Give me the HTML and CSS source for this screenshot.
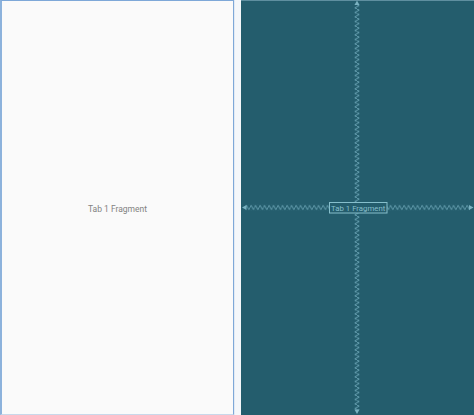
FILE: index.html
```html
<!DOCTYPE html>
<html>
<head>
<meta charset="utf-8">
<link rel="stylesheet" href="styles.css">
</head>
<body>
<div class="editor">
  <div class="design">
    <span class="design-label">Tab 1 Fragment</span>
  </div>
  <div class="divider"></div>
  <div class="blueprint">
    <svg class="bp-svg" width="233" height="415" viewBox="0 0 233 415">
      <defs>
        <pattern id="zv" patternUnits="userSpaceOnUse" x="113" y="0" width="6" height="4.5">
          <path d="M3 0 L5.2 1.1 L0.8 3.4 L3 4.5" fill="none" stroke="#6fa9b9" stroke-width="0.9"/>
        </pattern>
        <pattern id="zh" patternUnits="userSpaceOnUse" x="0" y="204.5" width="4.5" height="6">
          <path d="M0 3 L1.1 0.8 L3.4 5.2 L4.5 3" fill="none" stroke="#6fa9b9" stroke-width="0.9"/>
        </pattern>
      </defs>
      <line x1="0" y1="0.5" x2="233" y2="0.5" stroke="#5f8fa0" stroke-width="1"/>
      <rect x="113" y="4" width="6" height="198" fill="url(#zv)"/>
      <rect x="113" y="213" width="6" height="197" fill="url(#zv)"/>
      <rect x="4" y="204.5" width="84" height="6" fill="url(#zh)"/>
      <rect x="146" y="204.5" width="83" height="6" fill="url(#zh)"/>
      <path d="M116 0.5 L113.5 5 L118.5 5 Z" fill="#7ab2c1"/>
      <path d="M116 414 L113.5 409.5 L118.5 409.5 Z" fill="#7ab2c1"/>
      <path d="M1 207.5 L5.5 205 L5.5 210 Z" fill="#7ab2c1"/>
      <path d="M232.5 207.5 L228 205 L228 210 Z" fill="#7ab2c1"/>
      <rect x="88.5" y="202.5" width="57.5" height="10.5" fill="none" stroke="#86bfcc" stroke-width="1"/>
      <text x="117.2" y="210.6" text-anchor="middle" class="bp-text">Tab 1 Fragment</text>
    </svg>
  </div>
</div>
</body>
</html>
```
FILE: styles.css
```css
html, body {
  margin: 0;
  padding: 0;
  background: #f3f6f9;
  font-family: Roboto, "Noto Sans", sans-serif;
}
.editor {
  display: flex;
  width: 474px;
  height: 415px;
  overflow: hidden;
}
.design {
  width: 231px;
  height: 413px;
  background: #fafafa;
  border-top: 1px solid #7ea8d8;
  border-left: 2px solid #8cb2dc;
  border-right: 1px solid #7ea8d8;
  border-bottom: 1px solid #c8d8ea;
  display: flex;
  align-items: center;
  justify-content: center;
}
.design-label {
  font-size: 8.5px;
  color: #828282;
  margin-top: 2px;
}
.divider {
  width: 7px;
  height: 415px;
  background: #f4f7fa;
  border-left: 1px solid #e2eaf3;
  box-sizing: border-box;
}
.blueprint {
  width: 233px;
  height: 415px;
  background: #245d6d;
}
.bp-svg {
  display: block;
}
.bp-text {
  font-family: Roboto, "Noto Sans", sans-serif;
  font-size: 7.8px;
  fill: #86bfcc;
}
```
